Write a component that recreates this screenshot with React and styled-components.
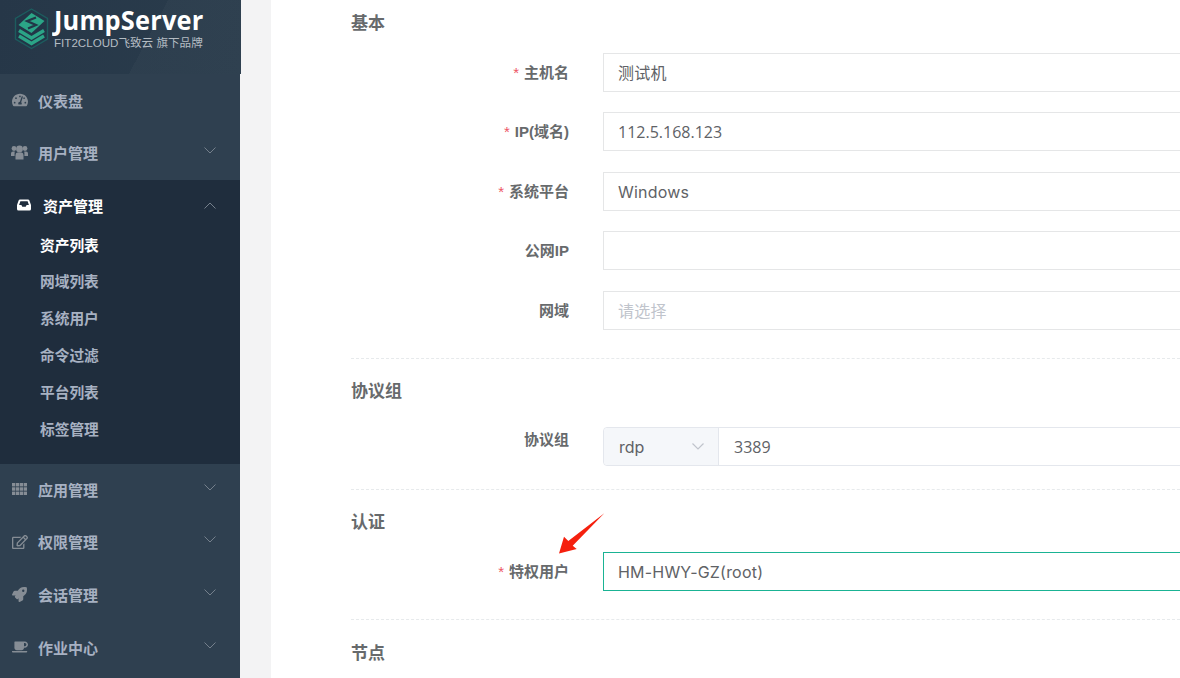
import React from 'react';
import styled, {createGlobalStyle} from 'styled-components';
import {FaTachometerAlt, FaRegEdit, FaRocket, FaCoffee} from 'react-icons/fa';

const GlobalStyle = createGlobalStyle`
  html, body {
    margin: 0;
    height: 100%;
    overflow: hidden;
    background: #f3f3f4;
  }
  * {
    box-sizing: border-box;
  }
  body {
    font-family: Inter, "Noto Sans CJK SC", sans-serif;
  }
`;

const Page = styled.div`
  position: relative;
  display: flex;
  width: 1180px;
  height: 678px;
  overflow: hidden;
`;

const Sidebar = styled.aside`
  flex: 0 0 240px;
  width: 240px;
  min-width: 0;
  background: #2f4050;
`;

const Brand = styled.div`
  display: flex;
  align-items: flex-start;
  width: 241px;
  height: 74px;
  margin-bottom: 0.8px;
  padding: 8px 0 0 14px;
  background:
    linear-gradient(118deg, transparent 0 60%, rgba(255, 255, 255, 0.025) 60% 100%),
    linear-gradient(100deg, #263748, #2a3c4c);
`;

const BrandText = styled.div`
  margin-left: 5px;
  width: 160px;
`;

const BrandName = styled.div`
  margin-top: -1px;
  font-family: "Open Sans", sans-serif;
  font-size: 27px;
  font-weight: 700;
  line-height: 26px;
  letter-spacing: 0.2px;
  color: #fff;
  white-space: nowrap;
  transform: scaleX(0.94);
  transform-origin: left center;
`;

const BrandSub = styled.div`
  margin-top: 2px;
  font-family: "Liberation Sans", "Noto Sans CJK SC", sans-serif;
  font-size: 11.6px;
  line-height: 16px;
  color: #b4bcc3;
  white-space: nowrap;
`;

const NavItem = styled.div`
  display: flex;
  align-items: center;
  height: 52.6px;
  padding-bottom: 2px;
  padding-left: ${p => (p.$active ? '16px' : '12px')};
  color: ${p => (p.$active ? '#fff' : '#a7b1c2')};
  font-size: 15px;
  font-weight: 700;
  font-family: "Noto Sans CJK SC", sans-serif;
`;

const NavIcon = styled.span`
  display: flex;
  justify-content: center;
  flex: 0 0 15px;
  min-width: 0;
  margin-right: ${p => (p.$active ? '12px' : '11px')};
  font-size: ${p => p.$size || 15}px;
  color: ${p => (p.$active ? '#fff' : '#868d95')};

  svg {
    flex-shrink: 0;
  }
`;

const NavLabel = styled.span`
  flex: 1;
`;

const Chevron = styled.svg`
  width: 12px;
  height: 7px;
  margin-right: 24px;
  margin-top: ${p => (p.$up ? '0' : '-4px')};
  fill: none;
  stroke: #75808c;
  stroke-width: 1;
`;

const OpenGroup = styled.div`
  height: 284px;
  background: #1f2d3d;
`;

const SubList = styled.div`
  margin-top: -6px;
  padding-left: 40px;
`;

const SubItem = styled.div`
  height: 36.8px;
  line-height: 36.8px;
  font-family: "Noto Sans CJK SC", sans-serif;
  font-size: 14.7px;
  font-weight: 700;
  color: ${p => (p.$active ? '#fff' : '#a7b1c2')};
`;

const Content = styled.main`
  flex: 1;
  min-width: 0;
  margin-left: 31px;
  padding: 7px 0 0 80px;
  background: #fff;
  overflow: hidden;
`;

const Section = styled.section`
  display: flex;
  flex-direction: column;
  gap: 20.4px;
  padding-bottom: 28px;
  border-bottom: 1px dashed #e7eaec;
  margin-bottom: 16.2px;
`;

const LastSection = styled.section`
  padding-top: 1px;
`;

const SectionTitle = styled.h3`
  margin: 0 0 -4.4px;
  height: 30px;
  line-height: 30px;
  font-family: "Noto Sans CJK SC", sans-serif;
  font-size: 17px;
  font-weight: 700;
  color: #676a6c;
`;

const Row = styled.div`
  display: flex;
  align-items: ${p => (p.$top ? 'flex-start' : 'center')};
  height: 39px;
  margin: ${p => (p.$top ? '6px 0 -5px' : '0')};
`;

const Label = styled.label`
  flex: 0 0 218px;
  margin-right: 34px;
  padding-top: 1px;
  text-align: right;
  font-family: "Liberation Sans", "Noto Sans CJK SC", sans-serif;
  font-size: 15px;
  line-height: 24px;
  font-weight: 700;
  color: #676a6c;
`;

const Star = styled.span`
  margin-right: 5px;
  font-weight: 400;
  color: #ed5565;
`;

const Field = styled.div`
  display: flex;
  align-items: center;
  flex: 0 0 700px;
  height: 39px;
  padding: 1px 0 0 14px;
  border: 1px solid #e5e6e7;
  font-family: ${p => (p.$numeric ? '"Open Sans"' : 'Inter')}, "Noto Sans CJK SC", sans-serif;
  font-size: 16px;
  line-height: 24px;
  letter-spacing: ${p => (p.$numeric ? '0' : '0.2px')};
  color: ${p => (p.$placeholder ? '#c0c4cc' : '#606266')};
`;

const FocusField = styled(Field)`
  border-color: #1ab394;
`;

const ProtocolField = styled.div`
  display: flex;
  flex: 0 0 700px;
  height: 39px;
  border: 1px solid #e4e7ed;
  border-radius: 4px 0 0 4px;
  font-size: 16px;
  color: #606266;
`;

const ProtocolSelect = styled.div`
  display: flex;
  align-items: center;
  justify-content: space-between;
  flex: 0 0 115px;
  padding: 1px 14px 0 15px;
  background: #f5f7fa;
  border-right: 1px solid #e4e7ed;
  border-radius: 4px 0 0 4px;
`;

const SelectCaret = styled.svg`
  width: 12px;
  height: 7px;
  fill: none;
  stroke: #c0c4cc;
  stroke-width: 1.2;
`;

const ProtocolPort = styled.div`
  display: flex;
  align-items: center;
  padding: 1px 0 0 15px;
  font-family: "Open Sans", sans-serif;
`;

const Annotation = styled.svg`
  position: absolute;
  left: 555px;
  top: 510px;
  width: 54px;
  height: 48px;
`;

const Logo = () => (
  <svg width="35" height="42" viewBox="0 0 35 42">
    <polygon points="17.5,1 33.5,10.5 33.5,31 17.5,40.5 1.5,31 1.5,10.5" fill="#223647" stroke="#1d5c5e" strokeWidth="1.4"/>
    <path d="M5 28 L17.5 35.5 L30 28" fill="none" stroke="#2ba587" strokeWidth="3.4"/>
    <path d="M5 22.5 L17.5 30 L30 22.5" fill="none" stroke="#2ba587" strokeWidth="3.4"/>
    <polygon points="17.5,5 30.5,13 17.5,25 4.5,17" fill="#2ba587"/>
    <path d="M22 9.5 L13 13 L22 17 L14 20.5" fill="none" stroke="#223647" strokeWidth="2.2"/>
  </svg>
);

const UsersIcon = () => (
  <svg width="17" height="15" viewBox="0 0 17 15" fill="currentColor">
    <circle cx="3" cy="3.5" r="2.4"/>
    <circle cx="14" cy="3.5" r="2.4"/>
    <circle cx="8.5" cy="4" r="3.4"/>
    <path d="M0 11 V8.5 Q0 6.5 2 6.5 H3.8 Q3.4 8 3.6 11 Z"/>
    <path d="M17 11 V8.5 Q17 6.5 15 6.5 H13.2 Q13.6 8 13.4 11 Z"/>
    <path d="M4.5 14.5 V10 Q4.5 7.5 6.5 7.5 H10.5 Q12.5 7.5 12.5 10 V14.5 Z"/>
  </svg>
);

const InboxIcon = () => (
  <svg width="14" height="12" viewBox="0 0 14 12" fill="currentColor">
    <path fillRule="evenodd" d="M3 0.5 H11 Q12 0.5 12.4 1.5 L14 6 V10 Q14 11.5 12.5 11.5 H1.5 Q0 11.5 0 10 V6 L1.6 1.5 Q2 0.5 3 0.5 Z M3.4 2.2 L2.1 6 H4.4 L5.3 7.8 H8.7 L9.6 6 H11.9 L10.6 2.2 Z"/>
  </svg>
);

const GridIcon = () => (
  <svg width="15" height="12" viewBox="0 0 15 12" fill="currentColor">
    {[0, 4.3, 8.6].map(y => [0, 3.9, 7.8, 11.7].map(x => (
      <rect key={`${x}-${y}`} x={x} y={y} width="3.3" height="3.4"/>
    )))}
  </svg>
);

const Down = () => (
  <Chevron viewBox="0 0 12 7"><path d="M0.5 0.5 L6 6 L11.5 0.5"/></Chevron>
);

const Up = () => (
  <Chevron $up viewBox="0 0 12 7"><path d="M0.5 6.5 L6 1 L11.5 6.5"/></Chevron>
);

const subItems = ['资产列表', '网域列表', '系统用户', '命令过滤', '平台列表', '标签管理'];

const bottomItems = [
  {icon: <GridIcon/>, label: '应用管理'},
  {icon: <FaRegEdit/>, label: '权限管理', size: 16},
  {icon: <FaRocket/>, label: '会话管理', size: 15},
  {icon: <FaCoffee/>, label: '作业中心', size: 16},
];

const basicFields = [
  {label: '主机名', value: '测试机', required: true},
  {label: 'IP(域名)', value: '112.5.168.123', required: true, numeric: true},
  {label: '系统平台', value: 'Windows', required: true},
  {label: '公网IP', value: ''},
  {label: '网域', value: '请选择', placeholder: true},
];

export default function App() {
  return (
    <Page>
      <GlobalStyle/>
      <Sidebar>
        <Brand>
          <Logo/>
          <BrandText>
            <BrandName>JumpServer</BrandName>
            <BrandSub>FIT2CLOUD飞致云 旗下品牌</BrandSub>
          </BrandText>
        </Brand>
        <NavItem>
          <NavIcon $size={16}><FaTachometerAlt/></NavIcon>
          <NavLabel>仪表盘</NavLabel>
        </NavItem>
        <NavItem>
          <NavIcon><UsersIcon/></NavIcon>
          <NavLabel>用户管理</NavLabel>
          <Down/>
        </NavItem>
        <OpenGroup>
          <NavItem $active>
            <NavIcon $active><InboxIcon/></NavIcon>
            <NavLabel>资产管理</NavLabel>
            <Up/>
          </NavItem>
          <SubList>
            {subItems.map((item, i) => (
              <SubItem key={item} $active={i === 0}>{item}</SubItem>
            ))}
          </SubList>
        </OpenGroup>
        {bottomItems.map(item => (
          <NavItem key={item.label}>
            <NavIcon $size={item.size}>{item.icon}</NavIcon>
            <NavLabel>{item.label}</NavLabel>
            <Down/>
          </NavItem>
        ))}
      </Sidebar>

      <Content>
        <Section>
          <SectionTitle>基本</SectionTitle>
          {basicFields.map(f => (
            <Row key={f.label}>
              <Label>{f.required && <Star>*</Star>}{f.label}</Label>
              <Field $placeholder={f.placeholder} $numeric={f.numeric}>{f.value}</Field>
            </Row>
          ))}
        </Section>
        <Section>
          <SectionTitle>协议组</SectionTitle>
          <Row $top>
            <Label>协议组</Label>
            <ProtocolField>
              <ProtocolSelect>
                rdp
                <SelectCaret viewBox="0 0 12 7"><path d="M0.5 0.5 L6 6 L11.5 0.5"/></SelectCaret>
              </ProtocolSelect>
              <ProtocolPort>3389</ProtocolPort>
            </ProtocolField>
          </Row>
        </Section>
        <Section>
          <SectionTitle>认证</SectionTitle>
          <Row>
            <Label><Star>*</Star>特权用户</Label>
            <FocusField>HM-HWY-GZ(root)</FocusField>
          </Row>
        </Section>
        <LastSection>
          <SectionTitle>节点</SectionTitle>
        </LastSection>
      </Content>

      {/* 截图上的红色标注箭头 */}
      <Annotation viewBox="555 510 54 48">
        <polygon points="604.3,513.3 572.7,545.7 576.7,549 559,553.5 564,536.7 568.3,541" fill="#f5200e"/>
      </Annotation>
    </Page>
  );
}
